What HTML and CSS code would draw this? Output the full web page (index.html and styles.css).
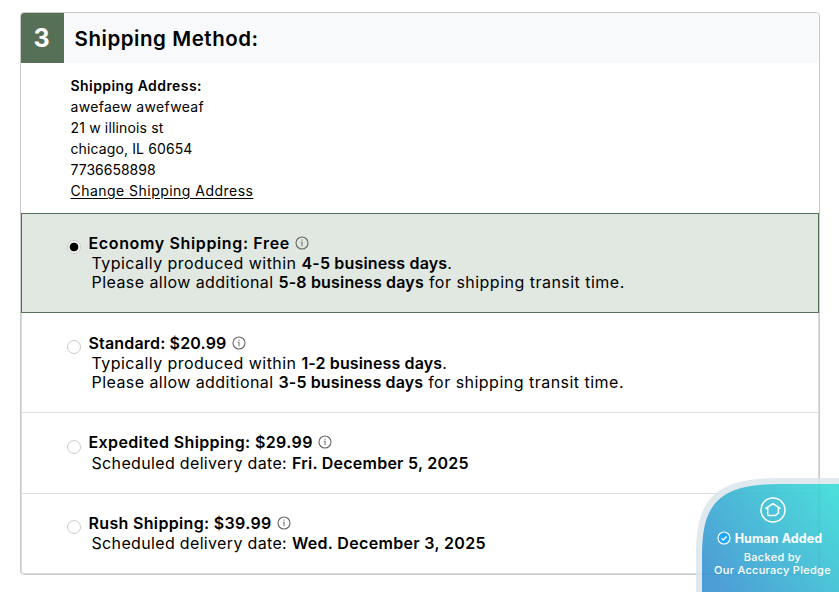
FILE: index.html
```html
<!DOCTYPE html>
<html lang="en">
<head>
<meta charset="utf-8">
<title>Shipping Method</title>
<link rel="stylesheet" href="styles.css">
</head>
<body>
<svg class="defs" aria-hidden="true">
  <symbol id="info" viewBox="0 0 14 14"><circle cx="7" cy="7" r="6" fill="none" stroke="#666" stroke-width="1.1"/><path d="M5.8 6.2H7v4M7 3.5v1.3" fill="none" stroke="#777" stroke-width="1.1"/></symbol>
</svg>
<main class="card">
  <header class="head"><div class="step">3</div><h1>Shipping Method:</h1></header>
  <section class="address">
    <div><b class="label">Shipping Address:</b></div>
    <div class="person">awefaew awefweaf</div>
    <div class="street">21 w illinois st</div>
    <div class="city">chicago, IL 60654</div>
    <div>7736658898</div>
    <div><a>Change Shipping Address</a></div>
  </section>
  <section class="option selected">
    <span class="radio"></span>
    <div class="info">
      <div class="name"><b class="economy">Economy Shipping: Free</b><svg><use href="#info"/></svg></div>
      <div class="line"><span class="typical">Typically produced within </span><b class="days">4-5 business days</b>.</div>
      <div class="line"><span class="allow">Please allow additional </span><b class="days">5-8 business days</b><span class="transit"> for shipping transit time.</span></div>
    </div>
  </section>
  <section class="option lower">
    <span class="radio"></span>
    <div class="info">
      <div class="name"><b class="days">Standard: $20.99</b><svg><use href="#info"/></svg></div>
      <div class="line"><span class="typical">Typically produced within </span><b class="quick">1-2 business days</b>.</div>
      <div class="line"><span class="allow">Please allow additional </span><b class="quick">3-5 business days</b><span class="transit"> for shipping transit time.</span></div>
    </div>
  </section>
  <section class="option short lower">
    <span class="radio"></span>
    <div class="info">
      <div class="name raised"><b class="expedited">Expedited Shipping: $29.99</b><svg><use href="#info"/></svg></div>
      <div class="line"><span class="scheduled">Scheduled delivery date: </span><b class="friday">Fri. December 5, 2025</b></div>
    </div>
  </section>
  <section class="option short last">
    <span class="radio"></span>
    <div class="info">
      <div class="name"><b class="rush">Rush Shipping: $39.99</b><svg><use href="#info"/></svg></div>
      <div class="line"><span class="scheduled">Scheduled delivery date: </span><b class="rush">Wed. December 3, 2025</b></div>
    </div>
  </section>
</main>
<aside class="pledge">
  <svg class="shape" viewBox="0 0 143 114">
    <defs><linearGradient id="g" gradientUnits="userSpaceOnUse" x1="15" y1="100" x2="135" y2="5"><stop offset="0" stop-color="#3390d0"/><stop offset="1" stop-color="#32dad6"/></linearGradient></defs>
    <path d="M0 114V76C0 20 20 0 83 0H143V6H83C24 6 6 25 6 76V114Z" fill="#dce7ec"/>
    <path d="M6 114V76C6 25 24 6 83 6H143V114Z" fill="url(#g)"/>
  </svg>
  <div class="content">
    <svg class="home" viewBox="0 0 26 26"><circle cx="13" cy="13" r="12" stroke-width="1.5"/><path d="M5.5 11.7 13 6.7l7.5 5M7.7 10.5v6.7q0 1.3 1.3 1.3h6.2l3.2-2.3v-5.7" stroke-width="1.5"/></svg>
    <div class="human"><svg viewBox="0 0 14 14"><circle cx="7" cy="7" r="6" fill="#1da8ff" stroke="#fff" stroke-width="1.2"/><path d="m4.5 7.2 1.8 1.7 3.2-3.4" fill="none" stroke="#fff" stroke-width="1.4"/></svg><b>Human Added</b></div>
    <div class="by">Backed by<br>Our Accuracy Pledge</div>
  </div>
</aside>
</body>
</html>
```
FILE: styles.css
```css
* { box-sizing: border-box; }
body { margin: 0; padding: 12px 0 0 20px; height: 592px; overflow: hidden; background: #fff; color: #000; font-family: Inter, sans-serif; }
.defs { position: absolute; width: 0; height: 0; }
b { font-weight: 600; }
.card { width: 800px; height: 563px; border: 1px solid #c9c9c9; border-radius: 4px; overflow: hidden; }
.head { display: flex; height: 50px; background: #f8f9fb; }
.step { width: 43px; padding-right: 2px; background: #567058; color: #fff; font: 700 25px/51px Inter, sans-serif; text-align: center; }
h1 { margin: 0 0 0 10.5px; font-size: 20.5px; font-weight: 600; line-height: 51px; letter-spacing: .55px; white-space: pre; }
.address { height: 150px; padding: 12px 0 0 49.5px; font-size: 14px; line-height: 21px; }
.label { letter-spacing: .43px; }
.person { letter-spacing: .31px; }
.street { letter-spacing: .16px; }
.city { letter-spacing: .12px; }
a { letter-spacing: .47px; text-decoration: underline; text-underline-offset: 2px; }
.option { display: flex; height: 100px; padding: 20px 0 0 45px; border: 1px solid #ddd; border-top: 0; font-size: 16px; }
.option.selected { border: 1px solid #567058; background: #e1e8e1; }
.option.short { height: 81px; }
.option.lower { padding-top: 21px; }
.option.last { height: 80px; border-radius: 0 0 3px 3px; }
.radio { width: 14px; height: 14px; margin: 6px 7.5px 0 0; border: 1px solid #ccc; border-radius: 50%; background: #fff; }
.selected .radio { background: radial-gradient(circle, #000 0 4px, #f4f4f4 4.7px); }
.name { display: flex; align-items: center; height: 20px; margin: -1px 0 1px; }
.name.raised { margin: -2px 0 2px; }
.name svg { width: 14px; height: 14px; margin-left: 5px; }
.line { height: 19px; padding-left: 3px; line-height: 18px; white-space: pre; }
.economy { letter-spacing: .64px; }
.typical { letter-spacing: .45px; }
.allow { letter-spacing: .44px; }
.transit { letter-spacing: .48px; }
.days { letter-spacing: .17px; }
.quick { letter-spacing: .13px; }
.expedited { letter-spacing: .38px; }
.scheduled { letter-spacing: .34px; }
.friday { letter-spacing: .25px; }
.rush { letter-spacing: .33px; }
.pledge { position: absolute; right: 0; bottom: 0; width: 143px; height: 114px; color: #fff; }
.shape { position: absolute; width: 143px; height: 114px; opacity: .87; }
.content { position: relative; display: flex; flex-direction: column; align-items: center; padding: 19px 0 0 10px; }
.home { width: 26px; height: 26px; fill: none; stroke: #fff; }
.human { display: flex; align-items: center; gap: 4px; height: 18px; margin: 6px 6px 4px 0; font-size: 12.5px; letter-spacing: .09px; }
.human b { font-weight: 700; }
.human svg { width: 14px; height: 14px; }
.by { font-size: 11px; font-weight: 500; line-height: 12.5px; letter-spacing: .28px; text-align: center; white-space: nowrap; }
```
